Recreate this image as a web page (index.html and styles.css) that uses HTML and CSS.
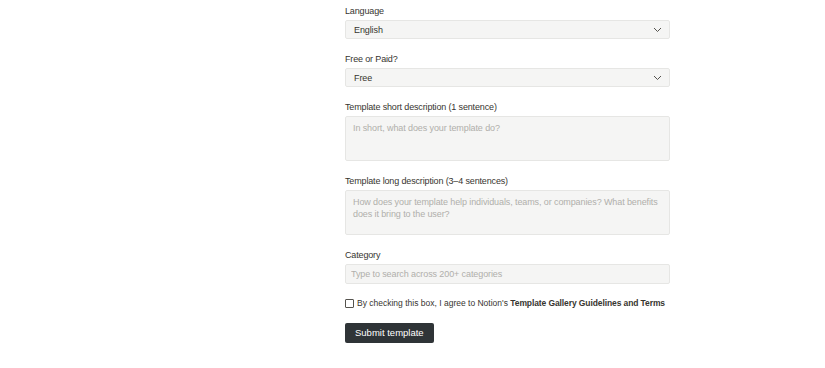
FILE: index.html
```html
<!DOCTYPE html>
<html lang="en">
<head>
    <meta charset="UTF-8">
    <title>Submit template</title>
    <link rel="stylesheet" href="styles.css">
</head>
<body>
    <form class="form">
        <div class="field">
            <div class="label">Language</div>
            <div class="select">
                <span>English</span>
                <svg class="chevron" width="9" height="6" viewBox="0 0 9 6"><path d="M1 1l3.5 3.5L8 1" fill="none" stroke="#55534e" stroke-width="1"/></svg>
            </div>
        </div>
        <div class="field">
            <div class="label">Free or Paid?</div>
            <div class="select">
                <span>Free</span>
                <svg class="chevron" width="9" height="6" viewBox="0 0 9 6"><path d="M1 1l3.5 3.5L8 1" fill="none" stroke="#55534e" stroke-width="1"/></svg>
            </div>
        </div>
        <div class="field">
            <div class="label">Template short description (1 sentence)</div>
            <textarea class="area" placeholder="In short, what does your template do?"></textarea>
        </div>
        <div class="field">
            <div class="label">Template long description (3–4 sentences)</div>
            <textarea class="area" placeholder="How does your template help individuals, teams, or companies? What benefits does it bring to the user?"></textarea>
        </div>
        <div class="field">
            <div class="label">Category</div>
            <input class="input" type="text" placeholder="Type to search across 200+ categories">
        </div>
        <label class="agree">
            <span class="box"></span>
            <span>By checking this box, I agree to Notion's <b>Template Gallery Guidelines and Terms</b></span>
        </label>
        <div class="actions">
            <button type="button" class="submit">Submit template</button>
        </div>
    </form>
</body>
</html>
```

FILE: styles.css
```css
/* page */
body {
    margin: 0;
    background: #fff;
    font-family: "Liberation Sans", Arial, sans-serif;
    color: #37352f;
}

.form {
    width: 325px;
    margin-left: 345px;
    padding-top: 5px;
    display: flex;
    flex-direction: column;
    gap: 14px;
}

.field {
    display: flex;
    flex-direction: column;
    gap: 3px;
}

.label {
    font-size: 9px;
    line-height: 12px;
    letter-spacing: -0.15px;
}

/* inputs */
.select,
.area,
.input {
    box-sizing: border-box;
    width: 100%;
    margin: 0;
    background: #f5f5f4;
    border: 1px solid #e6e6e4;
    border-radius: 2px;
    font-family: inherit;
    font-size: 9px;
    letter-spacing: -0.1px;
    color: #37352f;
}

.select {
    height: 19px;
    display: flex;
    align-items: center;
    justify-content: space-between;
    padding: 0 7px 0 8px;
}

.area {
    height: 45px;
    padding: 5px 7px;
    resize: none;
    line-height: 12px;
    outline: none;
}

.input {
    height: 20px;
    padding: 0 5px;
    outline: none;
}

.area::placeholder,
.input::placeholder {
    color: #b0afab;
}

.agree {
    display: flex;
    align-items: center;
    gap: 3px;
    margin-top: -1px;
    font-size: 8.5px;
    line-height: 12px;
    white-space: nowrap;
}

.agree b {
    letter-spacing: -0.1px;
}

.box {
    box-sizing: border-box;
    width: 9px;
    height: 9px;
    border: 1px solid #55534e;
    border-radius: 1px;
}

.actions {
    margin-top: -1px;
}

.submit {
    height: 20px;
    padding: 0 10px;
    background: #2f3437;
    color: #fff;
    border: none;
    border-radius: 2px;
    font-family: inherit;
    font-size: 9.5px;
    font-weight: 500;
}
```
